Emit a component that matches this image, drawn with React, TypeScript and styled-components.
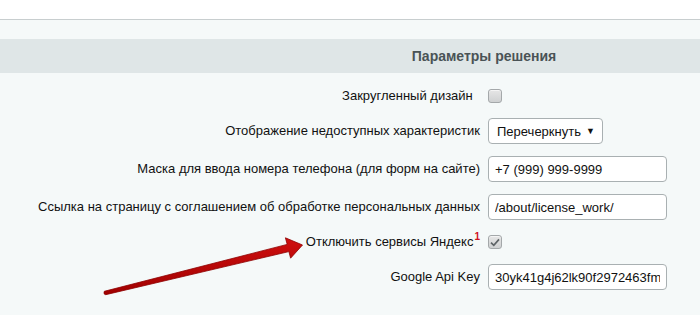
import styled, { createGlobalStyle } from 'styled-components';

const GlobalStyle = createGlobalStyle`
  html, body {
    margin: 0;
    padding: 0;
    background: #f5f9f9;
    overflow: hidden;
  }
  body {
    font-family: "Liberation Sans", Arial, sans-serif;
  }
`;

const Page = styled.div`
  position: relative;
  width: 700px;
  height: 315px;
  overflow: hidden;
  background: #f5f9f9;
`;

const TopBar = styled.div`
  height: 19px;
  background: #ffffff;
  border-bottom: 1px solid #c8cecf;
`;

const Settings = styled.div`
  width: 968px;
  padding-top: 19px;
`;

const Heading = styled.div`
  height: 34px;
  display: flex;
  align-items: center;
  justify-content: center;
  background: #dfe6e7;
  color: #4a5356;
  font-size: 14px;
  font-weight: bold;
`;

const Rows = styled.div`
  padding-top: 7px;
`;

const Row = styled.div<{ $compact?: boolean }>`
  display: grid;
  grid-template-columns: 50% 50%;
  align-items: center;
  padding: 6px 0;
  min-height: ${p => (p.$compact ? '20px' : '26px')};
`;

const Label = styled.div`
  text-align: right;
  padding-right: 4px;
  font-size: 13px;
  line-height: 20px;
  color: #111;
`;

const Note = styled.sup`
  color: #d0101c;
  font-size: 10px;
  font-weight: bold;
  line-height: 0;
  vertical-align: 6px;
  margin-left: 1px;
`;

const Field = styled.div`
  padding-left: 4px;
  display: flex;
  align-items: center;
`;

const TextInput = styled.input`
  box-sizing: border-box;
  width: 179px;
  height: 26px;
  margin: 0;
  padding: 0 6px;
  border: 1px solid #a9b0b2;
  border-radius: 4px;
  background: #ffffff;
  font-family: "Liberation Sans", Arial, sans-serif;
  font-size: 13px;
  color: #111;
  outline: none;
`;

const SelectBox = styled.div`
  box-sizing: border-box;
  width: 115px;
  height: 26px;
  display: flex;
  align-items: center;
  justify-content: space-between;
  padding: 0 7px 0 8px;
  border: 1px solid #a9b0b2;
  border-radius: 4px;
  background: #ffffff;
  font-size: 13px;
  color: #111;
`;

const Caret = styled.span`
  font-size: 9px;
  color: #111;
`;

const Check = styled.span`
  box-sizing: border-box;
  width: 14px;
  height: 14px;
  display: inline-flex;
  align-items: center;
  justify-content: center;
  border: 1px solid #a4a8aa;
  border-radius: 3px;
  background: linear-gradient(#e6e6e6, #cfd1d2);
  box-shadow: inset 0 1px 0 #f4f4f4;
`;

const Arrow = styled.svg`
  position: absolute;
  left: 0;
  top: 0;
  pointer-events: none;
`;

function Checkbox({ checked }: { checked?: boolean }) {
  return (
    <Check>
      {checked && (
        <svg width="10" height="9" viewBox="0 0 10 9">
          <path d="M1 4.6 L3.8 7.3 L9 1.4" fill="none" stroke="#5d6366" strokeWidth="1.7" />
        </svg>
      )}
    </Check>
  );
}

export default function App() {
  return (
    <Page>
      <GlobalStyle />
      <TopBar />
      <Settings>
        <Heading>Параметры решения</Heading>
        <Rows>
          <Row $compact>
            <Label>Закругленный дизайн&nbsp;&nbsp;</Label>
            <Field><Checkbox /></Field>
          </Row>
          <Row>
            <Label>Отображение недоступных характеристик</Label>
            <Field>
              <SelectBox>
                <span>Перечеркнуть</span>
                <Caret>▼</Caret>
              </SelectBox>
            </Field>
          </Row>
          <Row>
            <Label>Маска для ввода номера телефона (для форм на сайте)</Label>
            <Field><TextInput readOnly defaultValue="+7 (999) 999-9999" /></Field>
          </Row>
          <Row>
            <Label>Ссылка на страницу с соглашением об обработке персональных данных</Label>
            <Field><TextInput readOnly defaultValue="/about/license_work/" /></Field>
          </Row>
          <Row $compact>
            <Label>Отключить сервисы Яндекс<Note>1</Note></Label>
            <Field><Checkbox checked /></Field>
          </Row>
          <Row>
            <Label>Google Api Key</Label>
            <Field><TextInput readOnly defaultValue="30yk41g4j62lk90f2972463fmgq81" /></Field>
          </Row>
        </Rows>
      </Settings>
      <Arrow width="700" height="315" viewBox="0 0 700 315">
        <defs>
          <linearGradient id="arrowFill" x1="0" y1="0" x2="0" y2="1">
            <stop offset="0" stopColor="#d01010" />
            <stop offset="1" stopColor="#a00000" />
          </linearGradient>
        </defs>
        <path
          d="M104.3 291.3 L287.2 244.4 L285.4 237.8 L302.5 245 L290.6 258.2 L288.9 251.6 L105.7 294.7 Q103 294.2 104.3 291.3 Z"
          fill="url(#arrowFill)"
          stroke="#8e0000"
          strokeWidth="0.8"
          strokeLinejoin="round"
        />
      </Arrow>
    </Page>
  );
}
